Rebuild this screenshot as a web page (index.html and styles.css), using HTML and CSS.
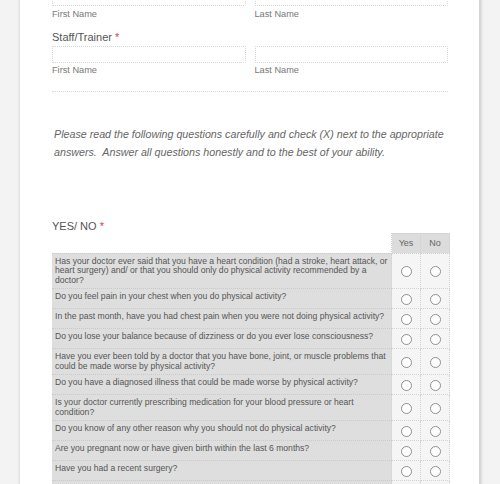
FILE: index.html
```html
<!DOCTYPE html>
<html lang="en">
<head>
    <meta charset="UTF-8">
    <meta name="viewport" content="width=device-width, initial-scale=1.0">
    <title>PAR-Q Form</title>
    <link rel="stylesheet" href="styles.css">
</head>
<body>
    <div class="form-card">
        <!-- Participant name (scrolled partly out of view) -->
        <div class="name-row">
            <div class="name-field">
                <input type="text" class="text-input">
                <label class="sub-label">First Name</label>
            </div>
            <div class="name-field">
                <input type="text" class="text-input">
                <label class="sub-label">Last Name</label>
            </div>
        </div>

        <div class="field-label">Staff/Trainer <span class="required">*</span></div>
        <div class="name-row">
            <div class="name-field">
                <input type="text" class="text-input">
                <label class="sub-label">First Name</label>
            </div>
            <div class="name-field">
                <input type="text" class="text-input">
                <label class="sub-label">Last Name</label>
            </div>
        </div>

        <div class="divider"></div>

        <p class="intro">Please read the following questions carefully and check (X) next to the appropriate answers.&nbsp; Answer all questions honestly and to the best of your ability.</p>

        <div class="field-label table-label">YES/ NO <span class="required">*</span></div>
        <table class="matrix">
            <thead>
                <tr>
                    <th class="blank"></th>
                    <th>Yes</th>
                    <th>No</th>
                </tr>
            </thead>
            <tbody id="matrix-body"></tbody>
        </table>
    </div>

    <script>
        const questions = [
            "Has your doctor ever said that you have a heart condition (had a stroke, heart attack, or heart surgery) and/ or that you should only do physical activity recommended by a doctor?",
            "Do you feel pain in your chest when you do physical activity?",
            "In the past month, have you had chest pain when you were not doing physical activity?",
            "Do you lose your balance because of dizziness or do you ever lose consciousness?",
            "Have you ever been told by a doctor that you have bone, joint, or muscle problems that could be made worse by physical activity?",
            "Do you have a diagnosed illness that could be made worse by physical activity?",
            "Is your doctor currently prescribing medication for your blood pressure or heart condition?",
            "Do you know of any other reason why you should not do physical activity?",
            "Are you pregnant now or have given birth within the last 6 months?",
            "Have you had a recent surgery?",
            "Are you currently taking any medication that could be affected by physical activity?"
        ];

        const body = document.getElementById('matrix-body');

        // Build one row per question with a Yes / No radio pair
        questions.forEach((text, i) => {
            const row = document.createElement('tr');
            row.innerHTML =
                `<td class="question">${text}</td>` +
                `<td class="answer"><input type="radio" class="radio" name="q${i}" value="yes"></td>` +
                `<td class="answer"><input type="radio" class="radio" name="q${i}" value="no"></td>`;
            body.appendChild(row);
        });
    </script>
</body>
</html>
```

FILE: styles.css
```css
html {
    overflow: hidden;
}
body {
    font-family: "Liberation Sans", Arial, sans-serif;
    background-color: #f3f3f3;
    margin: 0;
    padding: 0;
    color: #555;
}
.form-card {
    background: #fff;
    width: 461px;
    margin: -11px 0 0 19px;
    padding: 0 31px 40px 32px;
    box-sizing: border-box;
    border-left: 1px solid #e2e2e2;
    border-right: 1px solid #d4d4d4;
    box-shadow: 1px 0 3px rgba(0, 0, 0, 0.18);
}
.name-row {
    display: flex;
    gap: 9px;
}
.name-field {
    flex: 1;
    display: flex;
    flex-direction: column;
}
.text-input {
    height: 17px;
    margin: 0;
    padding: 0 4px;
    border: 1px dotted #d6d6d6;
    border-radius: 1px;
    background: #fff;
    box-sizing: border-box;
    width: 100%;
    font-size: 9px;
}
.sub-label {
    font-size: 9.2px;
    line-height: 11px;
    color: #777;
    margin-top: 2.5px;
}
.field-label {
    font-size: 11px;
    line-height: 13px;
    color: #555;
    margin: 11.5px 0 1.5px;
}
.required {
    color: #e53935;
}
.divider {
    border-top: 1px dotted #d8d8d8;
    margin-top: 14.5px;
}
.intro {
    font-style: italic;
    font-size: 10.7px;
    line-height: 18px;
    color: #666;
    margin: 33px 0 0 2px;
}
.table-label {
    margin: 59.5px 0 -0.5px;
}
.matrix {
    width: 398px;
    border-collapse: collapse;
    table-layout: fixed;
    font-size: 8.6px;
    color: #555;
}
.matrix th {
    background: #dcdcdc;
    font-weight: normal;
    font-size: 9px;
    color: #666;
    height: 19px;
    padding: 0;
    border: 1px dotted #cfcfcf;
    width: 28px;
}
.matrix th.blank {
    background: transparent;
    border: none;
    width: auto;
}
.question {
    background: #dedede;
    padding: 3px 3px 3px;
    line-height: 9.5px;
    vertical-align: top;
    border-top: 1px dotted #c9c9c9;
    border-bottom: 1px dotted #c9c9c9;
}
.answer {
    background: #f5f5f5;
    text-align: center;
    vertical-align: middle;
    padding: 0;
    height: 19px;
    border: 1px dotted #d2d2d2;
}
.radio {
    appearance: none;
    width: 11px;
    height: 11px;
    margin: 3px 0 0;
    border: 1px solid #8f8f8f;
    border-radius: 50%;
    background: #fff;
    box-sizing: border-box;
}
```
